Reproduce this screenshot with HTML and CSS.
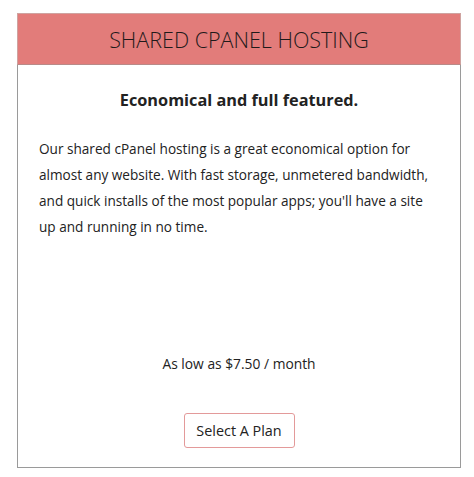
FILE: index.html
```html
<!DOCTYPE html>
<html>
<head>
<meta charset="utf-8">
<link rel="stylesheet" href="styles.css">
</head>
<body>
<div class="page">
  <div class="card">
    <div class="card-header">SHARED CPANEL HOSTING</div>
    <div class="card-body">
      <h2 class="tagline">Economical and full featured.</h2>
      <p class="desc">Our shared cPanel hosting is a great economical option for almost any website. With fast storage, unmetered bandwidth, and quick installs of the most popular apps; you'll have a site up and running in no time.</p>
      <div class="price">As low as $7.50 / month</div>
      <div class="actions"><a class="btn">Select A Plan</a></div>
    </div>
  </div>
</div>
</body>
</html>
```
FILE: styles.css
```css
html, body { margin: 0; padding: 0; background: #fff; }
body { font-family: "Open Sans", "Liberation Sans", sans-serif; color: #222; }
.page { padding: 13px 0 0 17px; }
.card {
  width: 444px;
  box-sizing: border-box;
  border: 1px solid #9a9a9a;
}
.card-header {
  height: 50px;
  background: #e27c7a;
  border-bottom: 1px solid #b98a88;
  display: flex;
  align-items: center;
  justify-content: center;
  font-size: 21.5px;
  font-weight: 300;
  color: #1f1a1a;
  margin: -1px -1px 0 -1px;
  border-top: 1px solid #cfa3a0;
  border-left: 1px solid #cfa3a0;
  border-right: 1px solid #cfa3a0;
}
.card-body { padding: 23px 21px 19px 21px; }
.tagline {
  margin: 0;
  text-align: center;
  font-size: 16.3px;
  line-height: 24px;
  font-weight: 700;
  color: #222;
}
.desc {
  margin: 24px 0 0 0;
  font-size: 13.6px;
  line-height: 26px;
  color: #222;
}
.price {
  margin-top: 114px;
  text-align: center;
  font-size: 13.8px;
  line-height: 20px;
}
.actions { margin-top: 39px; display: flex; justify-content: center; }
.btn {
  display: flex;
  align-items: center;
  justify-content: center;
  width: 111px;
  height: 35px;
  box-sizing: border-box;
  border: 1px solid #e39a9a;
  border-radius: 3px;
  font-size: 14.4px;
  color: #222;
}
```
